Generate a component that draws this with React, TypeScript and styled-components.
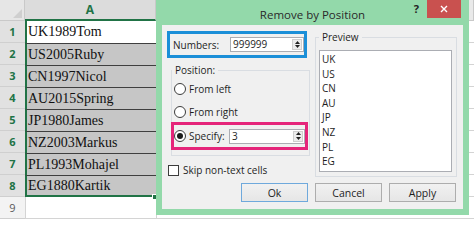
import React from "react";
import styled, { createGlobalStyle } from "styled-components";

const Global = createGlobalStyle`
  html, body { margin: 0; padding: 0; background: #ffffff; }
  body { width: 474px; height: 220px; overflow: hidden; }
  * { box-sizing: border-box; }
`;

const GREEN = "#217346";
const UI_FONT = `"Open Sans", "Noto Sans", Arial, sans-serif`;

const Stage = styled.div`
  position: relative;
  width: 474px;
  height: 220px;
  overflow: hidden;
  background: #ffffff;
`;

/* ---------- spreadsheet ---------- */
const Sheet = styled.div`
  display: grid;
  grid-template-columns: 25px 131px 1fr;
  grid-template-rows: 21px repeat(9, 22px);
  width: 474px;
`;

const Corner = styled.div`
  background: #e6e6e6;
  border-right: 1px solid #c9c9c9;
  border-bottom: 1px solid #c9c9c9;
  display: flex;
  align-items: flex-end;
  justify-content: flex-end;
  padding: 0 2px 2px 0;
`;

const ColHeader = styled.div<{ $active?: boolean }>`
  background: ${(p) => (p.$active ? "#dcdcdc" : "#e9e9e9")};
  border-right: 1px solid #c9c9c9;
  border-bottom: ${(p) => (p.$active ? `2px solid ${GREEN}` : "1px solid #c9c9c9")};
  color: ${(p) => (p.$active ? GREEN : "#444")};
  font: bold 12px ${UI_FONT};
  display: flex;
  align-items: center;
  justify-content: center;
`;

const RowHeader = styled.div<{ $active?: boolean }>`
  background: ${(p) => (p.$active ? "#e1e1e1" : "#f3f3f3")};
  border-bottom: 1px solid #cfcfcf;
  color: ${(p) => (p.$active ? GREEN : "#5a5a5a")};
  font: ${(p) => (p.$active ? "bold" : "normal")} 11px ${UI_FONT};
  display: flex;
  align-items: center;
  justify-content: center;
`;

const CellA = styled.div<{ $sel?: boolean; $active?: boolean; $first?: boolean; $last?: boolean }>`
  background: ${(p) => (p.$active ? "#ffffff" : p.$sel ? "#c6c6c6" : "#ffffff")};
  border-left: ${(p) => (p.$sel ? `2px solid ${GREEN}` : "1px solid #d4d4d4")};
  border-top: ${(p) => (p.$sel && !p.$first ? "1px solid #3f3f3f" : "0")};
  border-bottom: ${(p) => (p.$last ? `2px solid ${GREEN}` : p.$sel ? "0" : "1px solid #d4d4d4")};
  font: 14px "Liberation Serif", "Times New Roman", serif;
  color: #111;
  padding-left: 1px;
  display: flex;
  align-items: center;
  white-space: nowrap;
`;

const CellB = styled.div`
  background: #ffffff;
  border-left: 1px solid #d4d4d4;
  border-bottom: 1px solid #d4d4d4;
`;

const FillHandle = styled.div`
  position: absolute;
  left: 152px;
  top: 194px;
  width: 6px;
  height: 6px;
  background: ${GREEN};
  border: 1px solid #fff;
`;

/* ---------- dialog ---------- */
const Window = styled.div`
  position: absolute;
  left: 156px;
  top: 0;
  width: 313px;
  height: 215px;
  background: #93d9aa;
  display: flex;
  flex-direction: column;
  font-family: ${UI_FONT};
  color: #1e1e1e;
`;

const TitleBar = styled.div`
  height: 25px;
  display: grid;
  grid-template-columns: 1fr auto 1fr;
  align-items: start;
`;

const TitleText = styled.div`
  grid-column: 2;
  font-size: 11.5px;
  line-height: 25px;
  padding-top: 2px;
  color: #2a2a2a;
  white-space: nowrap;
`;

const TitleControls = styled.div`
  grid-column: 3;
  justify-self: end;
  display: flex;
  align-items: flex-start;
  margin-right: 8px;
`;

const HelpMark = styled.div`
  font: bold 11px ${UI_FONT};
  line-height: 18px;
  margin-right: 8px;
  color: #222;
`;

const CloseButton = styled.div`
  width: 34px;
  height: 18px;
  background: #c9514f;
  color: #fff;
  display: flex;
  align-items: center;
  justify-content: center;
`;

const Body = styled.div`
  margin: 0 6px;
  height: 184px;
  background: #f0f0f0;
  display: flex;
  flex-direction: column;
`;

const TopArea = styled.div`
  display: grid;
  grid-template-columns: 153px 142px;
  height: 153px;
`;

const LeftCol = styled.div`
  display: flex;
  flex-direction: column;
  padding: 6px 0 0 5px;
`;

const RightCol = styled.div`
  padding-top: 5px;
`;

const Highlight = styled.div<{ $color: string; $w: number; $h: number }>`
  width: ${(p) => p.$w}px;
  height: ${(p) => p.$h}px;
  border: 3px solid ${(p) => p.$color};
  display: flex;
  align-items: center;
`;

const NumbersBox = styled(Highlight)`
  padding-left: 3px;
`;

const SpecifyBox = styled(Highlight)`
  margin-left: -1px;
  padding-left: 0;
  gap: 3px;
`;

const FieldLabel = styled.span<{ $w: number }>`
  width: ${(p) => p.$w}px;
  font-size: 10px;
  white-space: nowrap;
`;

const Group = styled.fieldset<{ $w: number }>`
  width: ${(p) => p.$w}px;
  margin: 0;
  border: 1px solid #d9dde2;
  min-width: 0;
`;

const PositionGroup = styled(Group)`
  margin: 5px 0 0 4px;
  padding: 0 1px 5px 0;
`;

const PreviewGroup = styled(Group)`
  padding: 6px 4px 4px 3px;
`;

const Legend = styled.legend`
  font-size: 10px;
  line-height: 14px;
  padding: 0 3px;
  color: #1e1e1e;
`;

const RadioRow = styled.label<{ $h: number }>`
  height: ${(p) => p.$h}px;
  display: flex;
  align-items: center;
  gap: 3px;
  padding-left: 2px;
  font-size: 10px;
`;

const Radio = styled.span<{ $on?: boolean }>`
  width: 12px;
  height: 12px;
  border-radius: 50%;
  border: 1px solid #3c3c3c;
  background: #fff;
  display: flex;
  align-items: center;
  justify-content: center;
  flex: none;
  &::after {
    content: "";
    width: 6px;
    height: 6px;
    border-radius: 50%;
    background: ${(p) => (p.$on ? "#1b1b1b" : "transparent")};
  }
`;

const CheckRow = styled.label`
  margin-top: 8px;
  padding-left: 1px;
  display: flex;
  align-items: center;
  gap: 4px;
  font-size: 10px;
  height: 12px;
`;

const CheckBox = styled.span`
  width: 11px;
  height: 11px;
  border: 1px solid #3c3c3c;
  background: #fff;
  flex: none;
`;

const SpinInput = styled.div<{ $w: number; $h: number }>`
  width: ${(p) => p.$w}px;
  height: ${(p) => p.$h}px;
  background: #fff;
  border: 1px solid #abadb3;
  display: flex;
  align-items: stretch;
  flex: none;
`;

const SpinValue = styled.span`
  flex: 1;
  font-size: 10px;
  line-height: 13px;
  padding-left: 2px;
  color: #1e1e1e;
`;

const Spinner = styled.span`
  width: 10px;
  margin: 1px;
  background: #ececec;
  border: 1px solid #cfcfcf;
  display: flex;
  flex-direction: column;
  align-items: center;
  justify-content: space-around;
`;

const ListBox = styled.div`
  height: 122px;
  background: #ffffff;
  border: 1px solid #abadb3;
  padding: 1px 2px;
  font-size: 10px;
  line-height: 14.6px;
  color: #1e1e1e;
`;

const ButtonRow = styled.div`
  margin-top: 5px;
  display: flex;
  justify-content: flex-end;
  gap: 7px;
  padding-right: 7px;
`;

const DlgButton = styled.div<{ $default?: boolean }>`
  width: 67px;
  height: 19px;
  background: linear-gradient(#f1f1f1, #e6e6e6);
  border: 1px solid ${(p) => (p.$default ? "#6fa9dc" : "#adadad")};
  font-size: 10.5px;
  display: flex;
  align-items: center;
  justify-content: center;
  color: #1e1e1e;
`;

const Spin = () => (
  <Spinner>
    <svg width="5" height="3" viewBox="0 0 5 3">
      <path d="M0 3 L2.5 0 L5 3 Z" fill="#222" />
    </svg>
    <svg width="5" height="3" viewBox="0 0 5 3">
      <path d="M0 0 L5 0 L2.5 3 Z" fill="#222" />
    </svg>
  </Spinner>
);

const rows = [
  "UK1989Tom",
  "US2005Ruby",
  "CN1997Nicol",
  "AU2015Spring",
  "JP1980James",
  "NZ2003Markus",
  "PL1993Mohajel",
  "EG1880Kartik",
];

const preview = ["UK", "US", "CN", "AU", "JP", "NZ", "PL", "EG"];

export default function App() {
  return (
    <Stage>
      <Global />
      <Sheet>
        <Corner>
          <svg width="9" height="9" viewBox="0 0 9 9">
            <path d="M9 0 L9 9 L0 9 Z" fill="#cfcfcf" />
          </svg>
        </Corner>
        <ColHeader $active>A</ColHeader>
        <ColHeader />
        {rows.map((t, i) => (
          <React.Fragment key={t}>
            <RowHeader $active>{i + 1}</RowHeader>
            <CellA $sel $active={i === 0} $first={i === 0} $last={i === rows.length - 1}>
              {t}
            </CellA>
            <CellB />
          </React.Fragment>
        ))}
        <RowHeader>9</RowHeader>
        <CellA />
        <CellB />
      </Sheet>
      <FillHandle />

      <Window>
        <TitleBar>
          <TitleText>Remove by Position</TitleText>
          <TitleControls>
            <HelpMark>?</HelpMark>
            <CloseButton>
              <svg width="8" height="8" viewBox="0 0 8 8">
                <path d="M1 1 L7 7 M7 1 L1 7" stroke="#fff" strokeWidth="1.4" />
              </svg>
            </CloseButton>
          </TitleControls>
        </TitleBar>
        <Body>
          <TopArea>
            <LeftCol>
              <NumbersBox $color="#1b8fd8" $w={140} $h={27}>
                <FieldLabel $w={57}>Numbers:</FieldLabel>
                <SpinInput $w={74} $h={15}>
                  <SpinValue>999999</SpinValue>
                  <Spin />
                </SpinInput>
              </NumbersBox>
              <PositionGroup $w={139}>
                <Legend>Position:</Legend>
                <RadioRow $h={24}>
                  <Radio />
                  From left
                </RadioRow>
                <RadioRow $h={21}>
                  <Radio />
                  From right
                </RadioRow>
                <SpecifyBox $color="#e5257a" $w={137} $h={28}>
                  <Radio $on />
                  <FieldLabel $w={37}>Specify:</FieldLabel>
                  <SpinInput $w={76} $h={15}>
                    <SpinValue>3</SpinValue>
                    <Spin />
                  </SpinInput>
                </SpecifyBox>
              </PositionGroup>
              <CheckRow>
                <CheckBox />
                Skip non-text cells
              </CheckRow>
            </LeftCol>
            <RightCol>
              <PreviewGroup $w={142}>
                <Legend>Preview</Legend>
                <ListBox>
                  {preview.map((p) => (
                    <div key={p}>{p}</div>
                  ))}
                </ListBox>
              </PreviewGroup>
            </RightCol>
          </TopArea>
          <ButtonRow>
            <DlgButton $default>Ok</DlgButton>
            <DlgButton>Cancel</DlgButton>
            <DlgButton>Apply</DlgButton>
          </ButtonRow>
        </Body>
      </Window>
    </Stage>
  );
}
